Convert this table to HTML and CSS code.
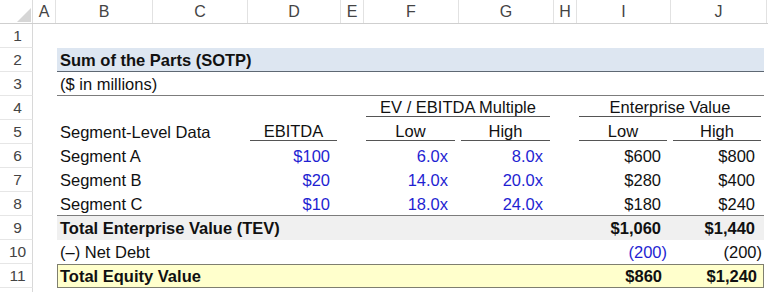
FILE: index.html
```html
<!DOCTYPE html>
<html>
<head>
<meta charset="utf-8">
<link rel="stylesheet" href="styles.css">
</head>
<body>
<div class="sheet">
  <div class="colhdr">
    <div class="corner"><svg width="32" height="23" viewBox="0 0 32 23"><polygon points="31,8 31,22 17,22" fill="#d6d6d6"/></svg></div>
    <div class="ch w-a">A</div>
    <div class="ch w-b">B</div>
    <div class="ch w-c">C</div>
    <div class="ch w-d">D</div>
    <div class="ch w-e">E</div>
    <div class="ch w-f">F</div>
    <div class="ch w-g">G</div>
    <div class="ch w-h">H</div>
    <div class="ch w-i">I</div>
    <div class="ch w-j">J</div>
    <div class="ch-rest"></div>
  </div>

  <div class="row"><div class="rn">1</div><div class="sp"></div><div class="cells"></div></div>

  <div class="row"><div class="rn">2</div><div class="sp"></div>
    <div class="cells band-blue bold"><div class="c span-all">Sum of the Parts (SOTP)</div></div>
  </div>

  <div class="row"><div class="rn">3</div><div class="sp"></div>
    <div class="cells rule"><div class="c span-all">($ in millions)</div></div>
  </div>

  <div class="row"><div class="rn">4</div><div class="sp"></div>
    <div class="cells">
      <div class="c"></div><div class="c"></div><div class="c"></div><div class="c"></div>
      <div class="c u span2"><span class="ul">EV / EBITDA Multiple</span></div>
      <div class="c"></div>
      <div class="c u span2"><span class="ul">Enterprise Value</span></div>
    </div>
  </div>

  <div class="row"><div class="rn">5</div><div class="sp"></div>
    <div class="cells">
      <div class="c span2">Segment-Level Data</div>
      <div class="c u"><span class="ul">EBITDA</span></div>
      <div class="c"></div>
      <div class="c u"><span class="ul">Low</span></div>
      <div class="c u"><span class="ul">High</span></div>
      <div class="c"></div>
      <div class="c u"><span class="ul">Low</span></div>
      <div class="c u"><span class="ul">High</span></div>
    </div>
  </div>

  <div class="row"><div class="rn">6</div><div class="sp"></div>
    <div class="cells">
      <div class="c span2">Segment A</div>
      <div class="c n blue">$100</div><div class="c"></div>
      <div class="c n blue">6.0x</div><div class="c n blue">8.0x</div><div class="c"></div>
      <div class="c n ev">$600</div><div class="c n ev">$800</div>
    </div>
  </div>

  <div class="row"><div class="rn">7</div><div class="sp"></div>
    <div class="cells">
      <div class="c span2">Segment B</div>
      <div class="c n blue">$20</div><div class="c"></div>
      <div class="c n blue">14.0x</div><div class="c n blue">20.0x</div><div class="c"></div>
      <div class="c n ev">$280</div><div class="c n ev">$400</div>
    </div>
  </div>

  <div class="row"><div class="rn">8</div><div class="sp"></div>
    <div class="cells rule">
      <div class="c span2">Segment C</div>
      <div class="c n blue">$10</div><div class="c"></div>
      <div class="c n blue">18.0x</div><div class="c n blue">24.0x</div><div class="c"></div>
      <div class="c n ev">$180</div><div class="c n ev">$240</div>
    </div>
  </div>

  <div class="row"><div class="rn">9</div><div class="sp"></div>
    <div class="cells band-gray bold">
      <div class="c span7">Total Enterprise Value (TEV)</div>
      <div class="c n ev">$1,060</div><div class="c n ev">$1,440</div>
    </div>
  </div>

  <div class="row"><div class="rn">10</div><div class="sp"></div>
    <div class="cells">
      <div class="c span7">(&ndash;) Net Debt</div>
      <div class="c n neg blue">(200)</div><div class="c n neg2">(200)</div>
    </div>
  </div>

  <div class="row"><div class="rn">11</div><div class="sp"></div>
    <div class="cells band-yellow bold">
      <div class="c span7">Total Equity Value</div>
      <div class="c n ev">$860</div><div class="c n ev">$1,240</div>
    </div>
  </div>

  <div class="row"><div class="rn"></div><div class="sp"></div><div class="cells"></div></div>
</div>
</body>
</html>
```

FILE: styles.css
```css
* { box-sizing: border-box; }
html, body { margin: 0; padding: 0; background: #fff; }
body {
  font-family: "Liberation Sans", Arial, sans-serif;
  color: #111;
  overflow: hidden;
}
.sheet { width: 768px; }

.colhdr {
  display: flex;
  height: 24px;
  border-bottom: 1px solid #cfcfcf;
}
.corner {
  width: 33px;
  border-right: 1px solid #dcdcdc;
  flex: none;
}
.corner svg { display: block; }
.ch {
  flex: none;
  border-right: 1px solid #e2e2e2;
  font-size: 16px;
  color: #444;
  display: flex;
  align-items: center;
  justify-content: center;
  padding-top: 1px;
}
.ch-rest { flex: 1; }
.w-a { width: 23px; }
.w-b { width: 97px; }
.w-c { width: 95px; }
.w-d { width: 93px; }
.w-e { width: 23px; }
.w-f { width: 95px; }
.w-g { width: 95px; }
.w-h { width: 23px; }
.w-i { width: 94px; }
.w-j { width: 96px; }

.row {
  display: flex;
  height: 24px;
}
.rn {
  flex: none;
  width: 33px;
  border-right: 1px solid #d8d8d8;
  border-bottom: 1px solid #e6e6e6;
  font-size: 15.5px;
  color: #444;
  display: flex;
  align-items: center;
  justify-content: center;
  padding-left: 3px;
  padding-top: 1px;
}
.sp { flex: none; width: 24px; }
.cells {
  flex: none;
  width: 707px;
  display: grid;
  grid-template-columns: 95px 95px 93px 23px 95px 95px 23px 94px 94px;
  font-size: 16.5px;
}
.c {
  display: flex;
  align-items: center;
  padding-left: 3px;
  padding-top: 1px;
  white-space: nowrap;
  min-width: 0;
}
.span-all { grid-column: 1 / -1; }
.span2 { grid-column: span 2; }
.span7 { grid-column: span 7; }

.n { justify-content: flex-end; padding-left: 0; padding-right: 10px; }
.ev { padding-right: 9px; }
.neg { padding-right: 3px; }
.neg2 { padding-right: 2px; }
.blue { color: #1f1fd2; }
.bold { font-weight: bold; }

.u {
  padding: 0 3px 3px 3px;
  align-items: flex-end;
}
.ul {
  display: flex;
  align-items: center;
  justify-content: center;
  width: 100%;
  height: 20px;
  padding-top: 1px;
  border-bottom: 1px solid #555;
}

.rule { border-bottom: 1px solid #7c7c7c; }
.band-blue { background: #dde6f1; border-bottom: 1px solid #5e6873; }
.band-gray { background: #f0f0f0; }
.band-yellow { background: #ffffcc; border: 1px solid #7f7f6f; }
.band-yellow .c:first-child { padding-left: 2px; }
.band-yellow .ev:last-child { padding-right: 8px; }
```
